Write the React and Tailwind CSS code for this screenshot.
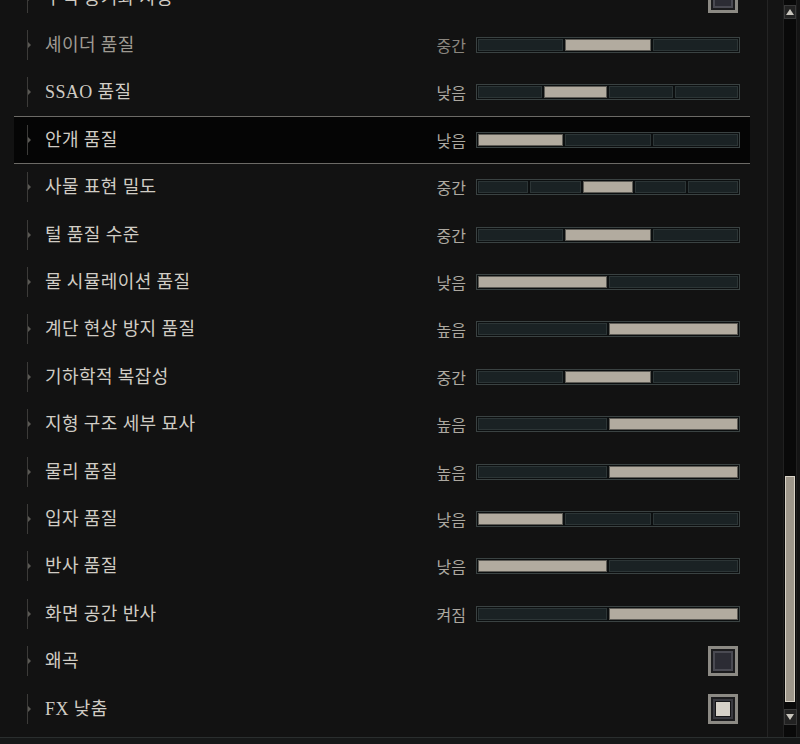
import React from "react";

const rows = [
  { label: "수직 동기화 사용", type: "check", checked: false, partial: true },
  { label: "셰이더 품질", value: "중간", segs: 3, fill: 1, dim: true },
  { label: "SSAO 품질", value: "낮음", segs: 4, fill: 1 },
  { label: "안개 품질", value: "낮음", segs: 3, fill: 0, active: true },
  { label: "사물 표현 밀도", value: "중간", segs: 5, fill: 2 },
  { label: "털 품질 수준", value: "중간", segs: 3, fill: 1 },
  { label: "물 시뮬레이션 품질", value: "낮음", segs: 2, fill: 0 },
  { label: "계단 현상 방지 품질", value: "높음", segs: 2, fill: 1 },
  { label: "기하학적 복잡성", value: "중간", segs: 3, fill: 1 },
  { label: "지형 구조 세부 묘사", value: "높음", segs: 2, fill: 1 },
  { label: "물리 품질", value: "높음", segs: 2, fill: 1 },
  { label: "입자 품질", value: "낮음", segs: 3, fill: 0 },
  { label: "반사 품질", value: "낮음", segs: 2, fill: 0 },
  { label: "화면 공간 반사", value: "켜짐", segs: 2, fill: 1 },
  { label: "왜곡", type: "check", checked: false },
  { label: "FX 낮춤", type: "check", checked: true },
];

function Bar({ segs, fill }) {
  return (
    <div className="flex h-[16px] w-[264px] gap-[2px] border border-[#3a4242] bg-[#0c0f10] p-[1px]">
      {Array.from({ length: segs }).map((_, i) =>
        i === fill ? (
          <div key={i} className="flex-1 border border-[#5e5c56] bg-[#b2ab9f]" />
        ) : (
          <div key={i} className="flex-1 border border-[#2c3536] bg-[#1a2224]" />
        )
      )}
    </div>
  );
}

function Check({ checked }) {
  return (
    <div className="mr-[12px] flex h-[30px] w-[30px] items-center justify-center border-[3px] border-[#8c8a84] bg-[#1c1c1e] p-[2px]">
      {checked ? (
        <div className="flex h-full w-full items-center justify-center border-2 border-[#3a3a40] bg-[#141416]">
          <div className="h-[14px] w-[14px] bg-[#d6d1c8]" />
        </div>
      ) : (
        <div className="h-full w-full border-2 border-[#4a4a52] bg-[#2c2c34]" />
      )}
    </div>
  );
}

function Row({ r }) {
  const labelColor = r.dim ? "text-[#9e9a92]" : "text-[#d0ccc4]";
  const valueColor = r.dim ? "text-[#8a867f]" : "text-[#aca8a0]";
  return (
    <div
      className={
        "flex h-[47.4px] shrink-0 items-center " +
        (r.active
          ? "border-y border-[#6c6a66] bg-[#050505]"
          : "border-y border-transparent")
      }
    >
      <div className="ml-[13px] flex h-[30px] w-[5px] items-center">
        <div className="h-full w-px bg-[#3c3b39]" />
        <div className="h-0 w-0 border-y-[3px] border-l-[3px] border-y-transparent border-l-[#5a5954]" />
      </div>
      <div
        className={"ml-[13px] flex-1 text-[18px] leading-none tracking-[0.4px] " + labelColor}
        style={{ fontFamily: '"Liberation Serif", "Noto Sans CJK KR", serif' }}
      >
        {r.label}
      </div>
      {r.type === "check" ? (
        <Check checked={r.checked} />
      ) : (
        <div className="mr-[10px] flex items-center">
          <span
            className={"mr-[10px] text-[16px] leading-none " + valueColor}
            style={{ fontFamily: '"Noto Sans CJK KR", sans-serif' }}
          >
            {r.value}
          </span>
          <Bar segs={r.segs} fill={r.fill} />
        </div>
      )}
    </div>
  );
}

export default function App() {
  return (
    <div className="flex h-[744px] w-[800px] flex-col overflow-hidden bg-[#111111]">
      <div className="flex h-[737px] shrink-0">
        <div className="flex w-[767px] flex-col bg-[#121212]">
          <div className="ml-[14px] mt-[-26px] flex w-[736px] flex-col">
            {rows.map((r, i) => (
              <Row key={i} r={r} />
            ))}
          </div>
        </div>
        <div className="flex w-[33px] border-l border-[#242424] bg-[#141414]">
          <div className="ml-[15px] flex w-[14px] flex-col items-center border-x border-[#202020] bg-[#090909]">
            <div className="mt-[5px] flex h-[14px] w-[12px] items-center justify-center border border-[#3a3a3a] bg-[#222]">
              <div className="h-0 w-0 border-x-[4px] border-b-[6px] border-x-transparent border-b-[#c8c4bc]" />
            </div>
            <div className="mt-[457px] h-[226px] w-[10px] border border-[#d8d2c6] bg-[#9e978b]" />
            <div className="mt-[7px] flex h-[16px] w-[13px] items-center justify-center border border-[#3a3a3a] bg-[#222]">
              <div className="h-0 w-0 border-x-[4px] border-t-[6px] border-x-transparent border-t-[#c8c4bc]" />
            </div>
          </div>
        </div>
      </div>
      <div className="flex-1 border-t border-[#2a2e2e] bg-[#161818]" />
    </div>
  );
}
